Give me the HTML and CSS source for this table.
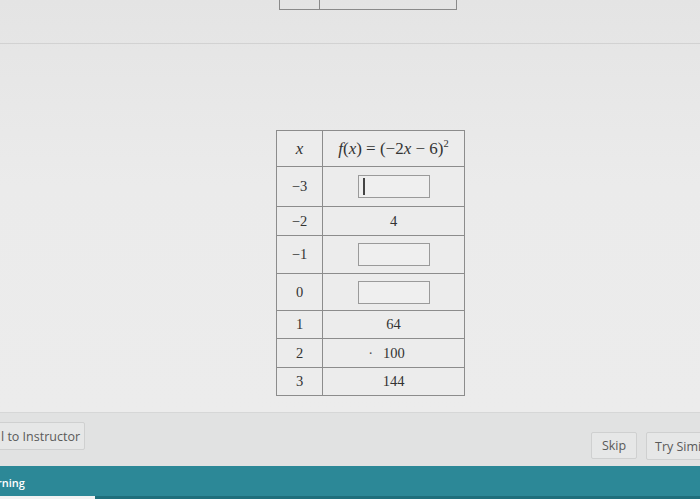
FILE: index.html
```html
<!DOCTYPE html>
<html>
<head>
<meta charset="utf-8">
<link rel="stylesheet" href="styles.css">
</head>
<body>
<div class="page">
  <div class="content">
    <div class="top-table"><div class="top-left"></div><div class="top-right"></div></div>
    <div class="rule"></div>
    <table class="fn-table">
      <colgroup><col class="cx"><col class="cf"></colgroup>
      <tr class="r-head"><th><i>x</i></th><th><i>f</i>(<i>x</i>) = (−2<i>x</i> − 6)<sup>2</sup></th></tr>
      <tr class="r1"><td>−3</td><td><span class="box"><span class="caret"></span></span></td></tr>
      <tr class="r2"><td>−2</td><td>4</td></tr>
      <tr class="r3"><td>−1</td><td><span class="box"></span></td></tr>
      <tr class="r4"><td>0</td><td><span class="box"></span></td></tr>
      <tr class="r5"><td>1</td><td>64</td></tr>
      <tr class="r6"><td>2</td><td><span class="dot">·</span>100</td></tr>
      <tr class="r7"><td>3</td><td>144</td></tr>
    </table>
  </div>
  <div class="footer">
    <div class="btn btn-instr">l to Instructor</div>
    <div class="right-btns">
      <div class="btn btn-skip">Skip</div>
      <div class="btn btn-try">Try Similar</div>
    </div>
  </div>
  <div class="teal">rning</div>
  <div class="bottom-strip"><div class="strip-white"></div></div>
</div>
</body>
</html>
```
FILE: styles.css
```css
html, body { margin: 0; padding: 0; }
body { width: 700px; height: 499px; overflow: hidden; background: #e8e8e8; }
.page { height: 499px; display: flex; flex-direction: column; }
.content {
  flex: 1;
  background: linear-gradient(180deg, #e4e4e4 0%, #ebebeb 45%, #ececec 100%);
}
.top-table {
  margin-left: 279px; width: 178px; height: 10px; box-sizing: border-box;
  border: 1px solid #8a8a8a; border-top: none; display: flex;
}
.top-left { width: 39px; border-right: 1px solid #8a8a8a; }
.rule { margin-top: 33px; height: 1px; background: #d2d2d2; }
.fn-table {
  margin-top: 86px; margin-left: 276px; border-collapse: collapse; table-layout: fixed; width: 188px;
  font-family: "Liberation Serif", "DejaVu Serif", serif; font-size: 14.5px; color: #333;
  background: #ececec;
}
.fn-table th, .fn-table td {
  border: 1px solid #8c8c8c; padding: 0; text-align: center; vertical-align: middle; font-weight: normal;
  white-space: nowrap;
}
.cx { width: 46px; }
.cf { width: 142px; }
.r-head th { height: 35px; font-size: 17px; }
.r-head sup { font-size: 10.5px; }
.r1 td { height: 39px; }
.r2 td { height: 28px; }
.r3 td { height: 37px; }
.r4 td { height: 36px; }
.r5 td { height: 27px; }
.r6 td { height: 28px; }
.r7 td { height: 27px; }
.box {
  display: inline-block; width: 70px; height: 21px; border: 1px solid #9a9a9a; background: #efefef;
  vertical-align: middle; position: relative;
}
.caret { position: absolute; left: 4px; top: 2px; width: 2px; height: 17px; background: #444; }
.dot { margin-right: 10px; margin-left: -14px; color: #555; }
.footer {
  height: 54px; background: #e1e2e2; border-top: 1px solid #d6d7d7; box-sizing: border-box;
  display: flex; justify-content: space-between; align-items: flex-start;
  font-family: "Open Sans", "Liberation Sans", sans-serif; font-size: 12.5px; color: #5a5a5a;
}
.btn {
  border: 1px solid #cfd0d0; border-radius: 2px; background: #e6e7e7; box-sizing: border-box;
  display: flex; align-items: center; white-space: nowrap;
}
.btn-instr { margin-top: 9px; margin-left: -4px; width: 89px; height: 28px; padding-left: 4px; }
.right-btns { display: flex; gap: 9px; margin-top: 19px; margin-right: -26px; }
.btn-skip { width: 46px; height: 27px; justify-content: center; }
.btn-try { width: 80px; height: 28px; padding-left: 8px; }
.teal {
  height: 30px; background: #2c8897; color: #ffffff; box-sizing: border-box;
  font-family: "Open Sans", "Liberation Sans", sans-serif; font-size: 11px; font-weight: 600;
  padding-top: 2px; display: flex; align-items: center; margin-left: -3px;
}
.bottom-strip { height: 3px; background: #1f6f7c; display: flex; }
.strip-white { width: 95px; background: #f2f2f2; }
```
